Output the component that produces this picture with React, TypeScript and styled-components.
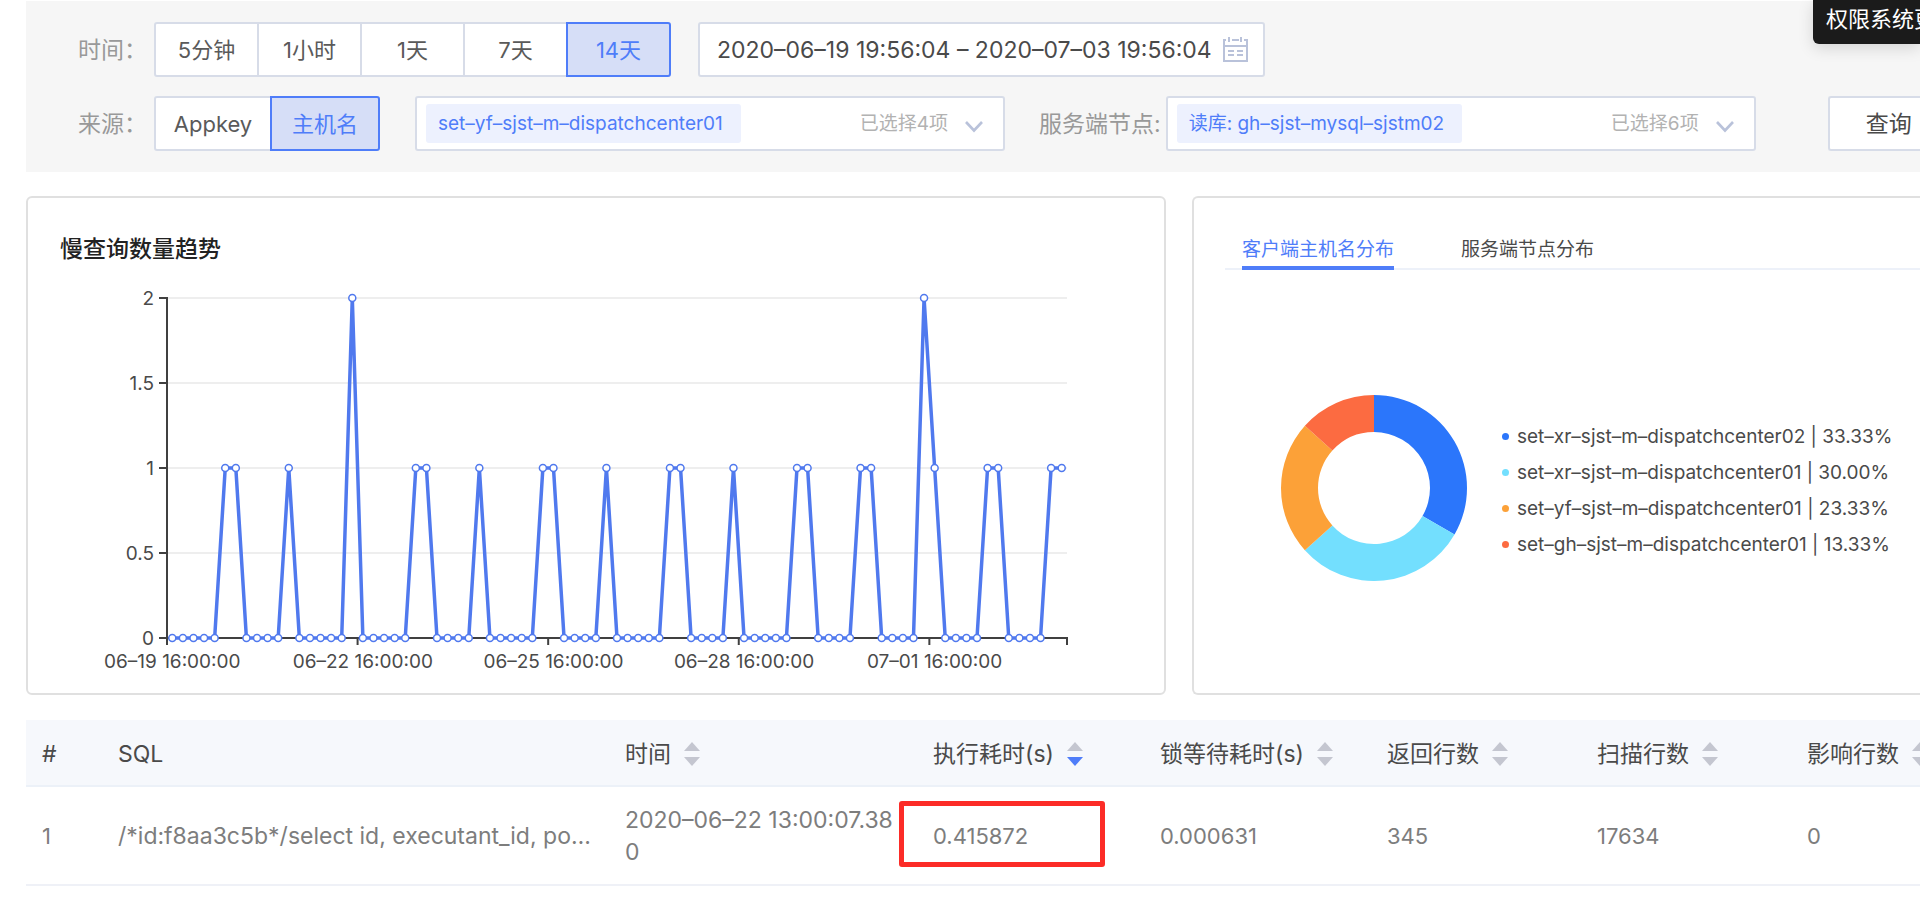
import React, { useState } from "react";
import styled, { createGlobalStyle } from "styled-components";

const Global = createGlobalStyle`
  *, *::before, *::after { box-sizing: border-box; }
  body {
    margin: 0;
    background: #fff;
    color: #4a4a4a;
    font-family: Inter, "Noto Sans CJK SC", sans-serif;
    font-size: 23px;
    font-weight: 400;
    line-height: 32px;
    overflow-x: hidden;
  }
  button, input { font: inherit; color: inherit; }
`;

const BLUE = "#4f7df9";
const BORDER = "#d7dce8";

const Page = styled.main`
  position: relative;
  padding: 1px 0 20px 26px;
  overflow: hidden;
`;

const FilterPanel = styled.section`
  display: flex;
  flex-direction: column;
  gap: 19px;
  padding: 21px 0 21px 52px;
  background: #f6f6f6;
`;

const FilterRow = styled.div`
  display: flex;
  align-items: center;
`;

const FilterLabel = styled.span`
  flex: none;
  width: 76px;
  color: #999;
  white-space: nowrap;
`;

const ButtonGroup = styled.div`
  display: flex;
  flex: none;
`;

const GroupButton = styled.button<{ $active: boolean; $width: number }>`
  position: relative;
  z-index: ${(p) => (p.$active ? 1 : 0)};
  width: ${(p) => p.$width}px;
  height: 55px;
  padding: 0;
  border: 2px solid ${(p) => (p.$active ? BLUE : BORDER)};
  background: ${(p) => (p.$active ? "#d6def7" : "#fff")};
  color: ${(p) => (p.$active ? BLUE : "#5a5a5a")};
  font-size: 22px;
  white-space: nowrap;
  cursor: pointer;
  & + & { margin-left: -2px; }
  &:first-child { border-radius: 3px 0 0 3px; }
  &:last-child { border-radius: 0 3px 3px 0; }
`;

const DateField = styled.label`
  display: flex;
  align-items: center;
  flex: none;
  width: 567px;
  height: 55px;
  margin-left: 27px;
  padding: 0 15px 0 17px;
  border: 2px solid ${BORDER};
  border-radius: 3px;
  background: #fff;
`;

const DateInput = styled.input`
  flex: 1;
  min-width: 0;
  padding: 0;
  border: 0;
  outline: 0;
  background: transparent;
`;

const Picker = styled.button<{ $gap: number }>`
  display: flex;
  align-items: center;
  flex: none;
  width: 590px;
  height: 55px;
  margin-left: ${(p) => p.$gap}px;
  padding: 0 20px 0 9px;
  border: 2px solid ${BORDER};
  border-radius: 3px;
  background: #fff;
  font-size: 19px;
  cursor: pointer;
`;

const Tag = styled.span`
  padding: 0 18px 0 12px;
  border-radius: 3px;
  background: #edf1fe;
  color: ${BLUE};
  line-height: 39px;
  white-space: nowrap;
`;

const Count = styled.span`
  margin-left: auto;
  margin-right: 17px;
  color: #b2b2b2;
`;

const NodeLabel = styled.span`
  flex: none;
  margin-left: 34px;
  color: #999;
`;

const QueryButton = styled.button`
  flex: 1 0 92px;
  height: 55px;
  margin-left: 72px;
  padding: 0 0 0 36px;
  border: 2px solid ${BORDER};
  border-right: 0;
  border-radius: 3px 0 0 3px;
  background: #fff;
  text-align: left;
  white-space: nowrap;
  overflow: hidden;
  cursor: pointer;
`;

const Tooltip = styled.div`
  position: absolute;
  top: 0;
  right: 0;
  z-index: 2;
  width: 107px;
  height: 44px;
  padding-left: 13px;
  overflow: hidden;
  border-bottom-left-radius: 6px;
  background: #1b1b1b;
  color: #fff;
  font-size: 22px;
  line-height: 38px;
  white-space: nowrap;
  box-shadow: 0 4px 16px rgba(0, 0, 0, 0.14);
`;

const Cards = styled.section`
  display: grid;
  grid-template-columns: 1140fr 728fr;
  gap: 26px;
  margin-top: 24px;
`;

const Card = styled.article<{ $open?: boolean }>`
  min-width: 0;
  border: 2px solid #e0e0e0;
  border-radius: 6px;
  ${(p) => p.$open && "border-right: 0; border-top-right-radius: 0; border-bottom-right-radius: 0;"}
`;

const CardTitle = styled.h2`
  margin: 35px 0 0 32px;
  color: #222;
  font-size: 23px;
  font-weight: 500;
`;

const TrendSvg = styled.svg`
  display: block;
  width: 100%;
  height: auto;
`;

const TabList = styled.div`
  display: flex;
  gap: 67px;
  margin: 33px 0 0 31px;
  padding-left: 17px;
  border-bottom: 2px solid #edf1f9;
`;

const Tab = styled.button<{ $active: boolean }>`
  height: 39px;
  margin-bottom: -2px;
  padding: 2px 0 0;
  border: 0;
  border-bottom: 4px solid ${(p) => (p.$active ? BLUE : "transparent")};
  background: none;
  color: ${(p) => (p.$active ? BLUE : "#4a4a4a")};
  font-size: 19px;
  cursor: pointer;
`;

const Distribution = styled.div`
  display: flex;
  align-items: center;
  gap: 35px;
  padding: 125px 0 0 87px;
`;

const Legend = styled.ul`
  flex: none;
  margin: 0;
  padding: 5px 0 0;
  list-style: none;
  font-size: 19px;
  line-height: 36px;
  white-space: nowrap;
`;

const LegendItem = styled.li<{ $color: string }>`
  display: flex;
  align-items: center;
  gap: 8px;
  &::before {
    content: "";
    width: 7px;
    height: 7px;
    border-radius: 50%;
    background: ${(p) => p.$color};
  }
`;

const Table = styled.table`
  width: 100%;
  margin-top: 25px;
  border-collapse: collapse;
  table-layout: fixed;
`;

const Col = styled.col<{ $width?: number }>`
  width: ${(p) => (p.$width ? `${p.$width}px` : "auto")};
`;

const Th = styled.th`
  height: 66px;
  padding: 2px 0 0 16px;
  border-bottom: 2px solid #ecf1f8;
  background: #f6f8fc;
  font-weight: 400;
  text-align: left;
  overflow: hidden;
`;

const HeadCell = styled.div`
  display: flex;
  align-items: center;
  gap: 13px;
  white-space: nowrap;
`;

const SortButton = styled.button`
  display: flex;
  flex: none;
  padding: 0;
  border: 0;
  background: none;
  cursor: pointer;
`;

const Td = styled.td<{ $numeric?: boolean }>`
  position: relative;
  height: 99px;
  padding: 0 16px;
  border-bottom: 2px solid #eff1f7;
  color: #7d7d7d;
  font-size: ${(p) => (p.$numeric ? 22 : 23)}px;
  word-break: break-all;
`;

const SqlText = styled.div`
  overflow: hidden;
  text-overflow: ellipsis;
  white-space: nowrap;
`;

const Highlight = styled.span`
  position: absolute;
  top: 14px;
  left: -18px;
  right: 39px;
  height: 66px;
  border: 5px solid #fc2c27;
  border-radius: 3px;
  pointer-events: none;
`;

const CalendarIcon = () => (
  <svg width="26" height="26" viewBox="0 0 26 26" fill="none" stroke="#b9c2da" strokeWidth="2" aria-hidden="true">
    <path d="M4 3H2V24H25V3H22M10 3H17M2 9H25M7 0V5M19 0V5" />
    <path d="M6 14H12M15 14H21M6 18H12M15 18H21" />
  </svg>
);

const ChevronIcon = () => (
  <svg width="18" height="18" viewBox="0 0 18 18" fill="none" stroke="#b9c2da" strokeWidth="2.6" aria-hidden="true">
    <path d="M1 7L9 15.5L17 7" />
  </svg>
);

const SortIcon = ({ down }: { down?: boolean }) => (
  <svg width="16" height="24" viewBox="0 0 16 24" aria-hidden="true">
    <path d="M0 9L8 0L16 9Z" fill="#c4c6d0" />
    <path d="M0 15L8 24L16 15Z" fill={down ? BLUE : "#c4c6d0"} />
  </svg>
);

const SPIKES: Record<number, number> = {
  5: 1, 6: 1, 11: 1, 17: 2, 23: 1, 24: 1, 29: 1, 35: 1, 36: 1, 41: 1, 47: 1, 48: 1,
  53: 1, 59: 1, 60: 1, 65: 1, 66: 1, 71: 2, 72: 1, 77: 1, 78: 1, 83: 1, 84: 1,
};
const COUNTS = Array.from({ length: 85 }, (_, i) => SPIKES[i] ?? 0);
const DAYS = ["06–19", "06–22", "06–25", "06–28", "07–01"];
const AXIS = { left: 139, right: 1039, top: 33, bottom: 373 };
const STEP = (AXIS.right - AXIS.left) / COUNTS.length;
const px = (i: number) => AXIS.left + (i + 0.5) * STEP;
const py = (v: number) => AXIS.bottom - (v / 2) * (AXIS.bottom - AXIS.top);

const TrendChart = () => (
  <TrendSvg viewBox="0 0 1136 428" role="img" aria-label="慢查询数量趋势">
    {[0.5, 1, 1.5, 2].map((v) => (
      <line key={v} x1={AXIS.left} x2={AXIS.right} y1={py(v)} y2={py(v)} stroke="#eeeeee" strokeWidth="2" />
    ))}
    <g stroke="#404040" strokeWidth="2">
      <line x1={AXIS.left} x2={AXIS.left} y1={AXIS.top - 1} y2={AXIS.bottom + 7} />
      <line x1={AXIS.left} x2={AXIS.right + 1} y1={AXIS.bottom} y2={AXIS.bottom} />
      {[0, 0.5, 1, 1.5, 2].map((v) => (
        <line key={v} x1={AXIS.left - 8} x2={AXIS.left} y1={py(v)} y2={py(v)} />
      ))}
      {[18, 36, 54, 72, 85].map((i) => (
        <line key={i} x1={AXIS.left + i * STEP} x2={AXIS.left + i * STEP} y1={AXIS.bottom} y2={AXIS.bottom + 7} />
      ))}
    </g>
    <g fill="#4a4a4a" fontSize="19">
      {[0, 0.5, 1, 1.5, 2].map((v) => (
        <text key={v} x={AXIS.left - 13} y={py(v) + 7} textAnchor="end">{v}</text>
      ))}
      {DAYS.map((d, i) => (
        <text key={d} x={px(i * 18)} y={AXIS.bottom + 30} textAnchor="middle">{`${d} 16:00:00`}</text>
      ))}
    </g>
    <polyline points={COUNTS.map((v, i) => `${px(i)},${py(v)}`).join(" ")} fill="none" stroke="#5079ee" strokeWidth="3.5" strokeLinejoin="bevel" />
    <g fill="#fff" stroke="#5079ee" strokeWidth="1.5">
      {COUNTS.map((v, i) => (
        <circle key={i} cx={px(i)} cy={py(v)} r="3.5" />
      ))}
    </g>
  </TrendSvg>
);

const SHARES = [
  { name: "set–xr–sjst–m–dispatchcenter02", percent: 33.33, color: "#2b76fb" },
  { name: "set–xr–sjst–m–dispatchcenter01", percent: 30, color: "#73dffe" },
  { name: "set–yf–sjst–m–dispatchcenter01", percent: 23.33, color: "#fca138" },
  { name: "set–gh–sjst–m–dispatchcenter01", percent: 13.33, color: "#fc6b41" },
];

const Donut = () => {
  const total = SHARES.reduce((sum, s) => sum + s.percent, 0);
  const at = (share: number, r: number) => {
    const a = (share / total) * Math.PI * 2;
    return `${93 + r * Math.sin(a)} ${93 - r * Math.cos(a)}`;
  };
  let start = 0;
  return (
    <svg width="186" height="186" viewBox="0 0 186 186" role="img" aria-label="客户端主机名分布">
      {SHARES.map((s) => {
        const from = start;
        start += s.percent;
        return (
          <path
            key={s.name}
            fill={s.color}
            d={`M${at(from, 93)}A93 93 0 0 1 ${at(start, 93)}L${at(start, 56)}A56 56 0 0 0 ${at(from, 56)}Z`}
          />
        );
      })}
    </svg>
  );
};

const RANGES = ["5分钟", "1小时", "1天", "7天", "14天"];
const SOURCES = [
  { name: "Appkey", width: 118 },
  { name: "主机名", width: 110 },
];
const TABS = ["客户端主机名分布", "服务端节点分布"];
const SORTABLE = ["时间", "执行耗时(s)", "锁等待耗时(s)", "返回行数", "扫描行数", "影响行数"];

export default function App() {
  const [range, setRange] = useState("14天");
  const [source, setSource] = useState("主机名");
  const [tab, setTab] = useState(TABS[0]);
  const [dates, setDates] = useState("2020–06–19 19:56:04 – 2020–07–03 19:56:04");

  return (
    <>
      <Global />
      <Page>
        <Tooltip role="tooltip">权限系统更新</Tooltip>
        <FilterPanel>
          <FilterRow>
            <FilterLabel id="range-label">时间：</FilterLabel>
            <ButtonGroup role="group" aria-labelledby="range-label">
              {RANGES.map((r) => (
                <GroupButton key={r} type="button" $width={105} $active={r === range} aria-pressed={r === range} onClick={() => setRange(r)}>
                  {r}
                </GroupButton>
              ))}
            </ButtonGroup>
            <DateField>
              <DateInput type="text" aria-label="时间范围" value={dates} onChange={(e) => setDates(e.target.value)} />
              <CalendarIcon />
            </DateField>
          </FilterRow>
          <FilterRow>
            <FilterLabel id="source-label">来源：</FilterLabel>
            <ButtonGroup role="group" aria-labelledby="source-label">
              {SOURCES.map((s) => (
                <GroupButton key={s.name} type="button" $width={s.width} $active={s.name === source} aria-pressed={s.name === source} onClick={() => setSource(s.name)}>
                  {s.name}
                </GroupButton>
              ))}
            </ButtonGroup>
            <Picker type="button" $gap={35} aria-haspopup="listbox">
              <Tag>set–yf–sjst–m–dispatchcenter01</Tag>
              <Count>已选择4项</Count>
              <ChevronIcon />
            </Picker>
            <NodeLabel id="node-label">服务端节点:</NodeLabel>
            <Picker type="button" $gap={5} aria-haspopup="listbox" aria-describedby="node-label">
              <Tag>读库: gh–sjst–mysql–sjstm02</Tag>
              <Count>已选择6项</Count>
              <ChevronIcon />
            </Picker>
            <QueryButton type="button">查询</QueryButton>
          </FilterRow>
        </FilterPanel>

        <Cards>
          <Card>
            <CardTitle>慢查询数量趋势</CardTitle>
            <TrendChart />
          </Card>
          <Card $open>
            <TabList role="tablist">
              {TABS.map((t) => (
                <Tab key={t} type="button" role="tab" $active={t === tab} aria-selected={t === tab} onClick={() => setTab(t)}>
                  {t}
                </Tab>
              ))}
            </TabList>
            <Distribution>
              <Donut />
              <Legend>
                {SHARES.map((s) => (
                  <LegendItem key={s.name} $color={s.color}>
                    {`${s.name} | ${s.percent.toFixed(2)}%`}
                  </LegendItem>
                ))}
              </Legend>
            </Distribution>
          </Card>
        </Cards>

        <Table>
          <colgroup>
            <Col $width={76} />
            <Col />
            <Col $width={308} />
            <Col $width={227} />
            <Col $width={227} />
            <Col $width={210} />
            <Col $width={210} />
            <Col $width={129} />
          </colgroup>
          <thead>
            <tr>
              <Th scope="col">#</Th>
              <Th scope="col">SQL</Th>
              {SORTABLE.map((name) => (
                <Th key={name} scope="col">
                  <HeadCell>
                    {name}
                    <SortButton type="button" aria-label={`${name} 排序`}>
                      <SortIcon down={name === "执行耗时(s)"} />
                    </SortButton>
                  </HeadCell>
                </Th>
              ))}
            </tr>
          </thead>
          <tbody>
            <tr>
              <Td $numeric>1</Td>
              <Td>
                <SqlText>/*id:f8aa3c5b*/select id, executant_id, po…</SqlText>
              </Td>
              <Td>2020–06–22 13:00:07.380</Td>
              <Td $numeric>
                0.415872
                <Highlight />
              </Td>
              <Td $numeric>0.000631</Td>
              <Td $numeric>345</Td>
              <Td $numeric>17634</Td>
              <Td $numeric>0</Td>
            </tr>
          </tbody>
        </Table>
      </Page>
    </>
  );
}
